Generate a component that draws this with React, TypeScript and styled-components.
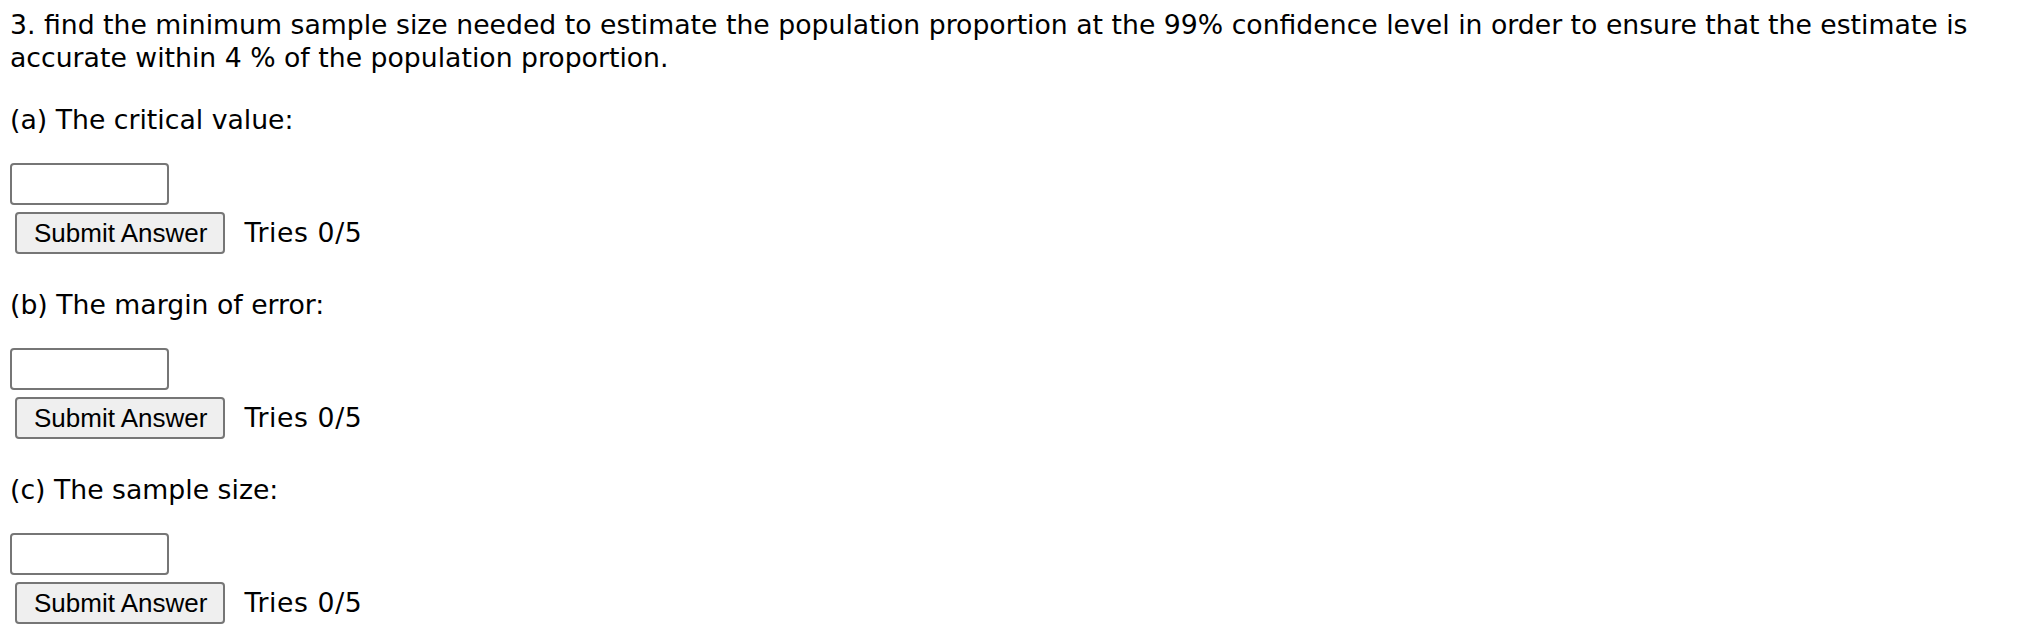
import React from 'react'
import styled, { createGlobalStyle } from 'styled-components'

const GlobalStyle = createGlobalStyle`
    html, body {
        margin: 0;
        padding: 0;
        background: #ffffff;
    }
`

const Page = styled.div`
    padding: 8px 10px 0 10px;
    font-family: "DejaVu Sans", Verdana, sans-serif;
    font-size: 26.7px;
    line-height: 33px;
    color: #000000;
`

const Question = styled.p`
    margin: 0 0 29px 0;
    max-width: 2000px;
`

const Part = styled.div`
    display: flex;
    flex-direction: column;
    align-items: flex-start;
    margin-bottom: 34px;
`

const Label = styled.div`
    margin-bottom: 27px;
`

const AnswerInput = styled.input`
    box-sizing: border-box;
    width: 159px;
    height: 42px;
    margin: 0;
    padding: 2px 6px;
    border: 2px solid #767676;
    border-radius: 4px;
    background: #ffffff;
    font-family: "DejaVu Sans", Verdana, sans-serif;
    font-size: 22px;
`

const SubmitRow = styled.div`
    display: flex;
    align-items: baseline;
    gap: 19px;
    margin-top: 7px;
    padding-left: 5px;
`

const SubmitButton = styled.button`
    box-sizing: border-box;
    height: 42px;
    margin: 0;
    padding: 4px 16px 4px 17px;
    border: 2px solid #767676;
    border-radius: 4px;
    background: #efefef;
    color: #000000;
    font-family: "Liberation Sans", Arial, sans-serif;
    font-size: 26px;
    line-height: 30px;
    cursor: pointer;
`

const Tries = styled.span`
    letter-spacing: 0.6px;
`

const parts = [
    '(a) The critical value:',
    '(b) The margin of error:',
    '(c) The sample size:'
]

const App: React.FC = () => {
    return <>
        <GlobalStyle />
        <Page>
            <Question>
                3. find the minimum sample size needed to estimate the population proportion at the 99% confidence level in order to ensure that the estimate is accurate within 4 % of the population proportion.
            </Question>
            {parts.map(label => (
                <Part key={label}>
                    <Label>{label}</Label>
                    <AnswerInput type="text" />
                    <SubmitRow>
                        <SubmitButton type="button">Submit Answer</SubmitButton>
                        <Tries>Tries 0/5</Tries>
                    </SubmitRow>
                </Part>
            ))}
        </Page>
    </>
}

export default App
